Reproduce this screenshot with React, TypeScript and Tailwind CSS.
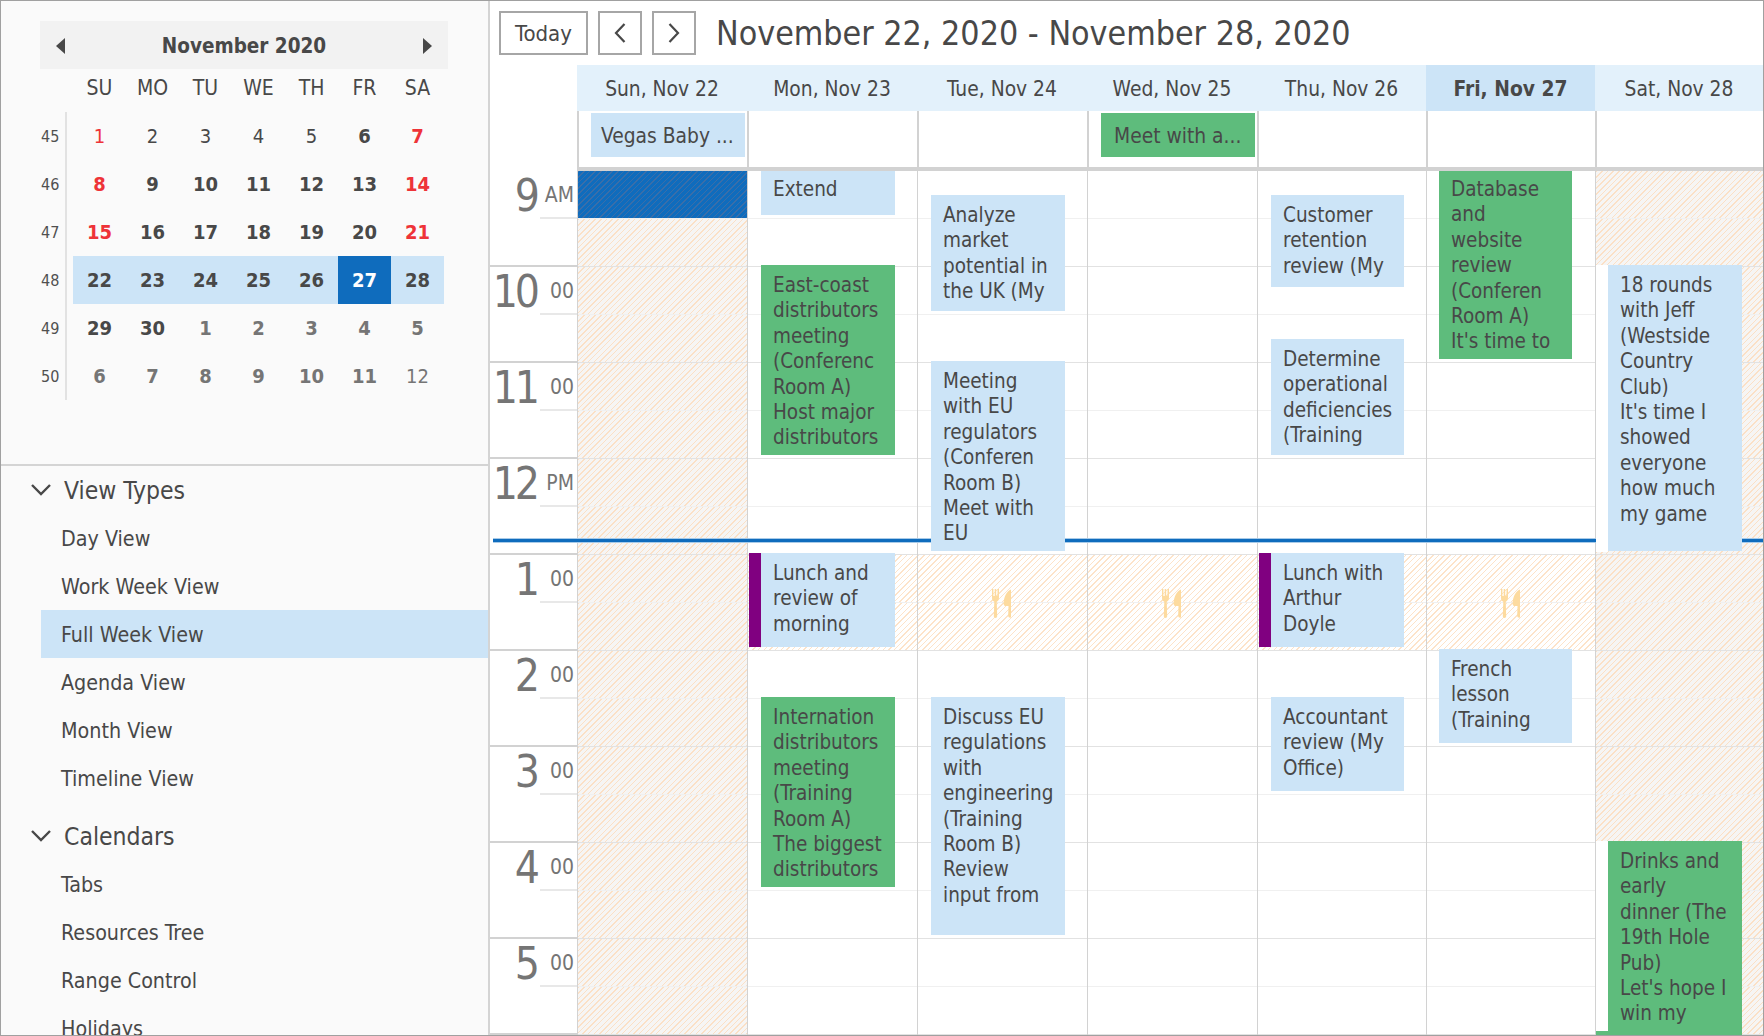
const font = "font-['DejaVu_Sans_Condensed','DejaVu_Sans',sans-serif]";

const hatchGray =
  'bg-[repeating-linear-gradient(135deg,#fbe0c6_0px,#fbe0c6_1px,#f6f5f4_1px,#f6f5f4_4px)]';
const hatchLight =
  'bg-[repeating-linear-gradient(135deg,#fde3c9_0px,#fde3c9_1px,#ffffff_1px,#ffffff_4px)]';
const hatchBlue =
  'bg-[repeating-linear-gradient(135deg,#3b6ea8_0px,#3b6ea8_1px,#0f6cbd_1px,#0f6cbd_4px)]';

type Day = { n: number; bold?: boolean; color?: string };

const red = 'text-[#ee3338]';
const gray = 'text-[#757575]';

const weeks: { week: number; days: Day[] }[] = [
  {
    week: 45,
    days: [
      { n: 1, color: red },
      { n: 2 },
      { n: 3 },
      { n: 4 },
      { n: 5 },
      { n: 6, bold: true },
      { n: 7, bold: true, color: red },
    ],
  },
  {
    week: 46,
    days: [
      { n: 8, bold: true, color: red },
      { n: 9, bold: true },
      { n: 10, bold: true },
      { n: 11, bold: true },
      { n: 12, bold: true },
      { n: 13, bold: true },
      { n: 14, bold: true, color: red },
    ],
  },
  {
    week: 47,
    days: [
      { n: 15, bold: true, color: red },
      { n: 16, bold: true },
      { n: 17, bold: true },
      { n: 18, bold: true },
      { n: 19, bold: true },
      { n: 20, bold: true },
      { n: 21, bold: true, color: red },
    ],
  },
  {
    week: 48,
    days: [22, 23, 24, 25, 26, 27, 28].map((n) => ({ n, bold: true })),
  },
  {
    week: 49,
    days: [
      { n: 29, bold: true },
      { n: 30, bold: true },
      { n: 1, bold: true, color: gray },
      { n: 2, bold: true, color: gray },
      { n: 3, bold: true, color: gray },
      { n: 4, bold: true, color: gray },
      { n: 5, bold: true, color: gray },
    ],
  },
  {
    week: 50,
    days: [
      { n: 6, bold: true, color: gray },
      { n: 7, bold: true, color: gray },
      { n: 8, bold: true, color: gray },
      { n: 9, bold: true, color: gray },
      { n: 10, bold: true, color: gray },
      { n: 11, bold: true, color: gray },
      { n: 12, color: gray },
    ],
  },
];

const viewTypes = ['Day View', 'Work Week View', 'Full Week View', 'Agenda View', 'Month View', 'Timeline View'];
const calendarItems = ['Tabs', 'Resources Tree', 'Range Control', 'Holidays'];

const Chevron = () => (
  <svg width="20" height="12" viewBox="0 0 20 12" className="ml-[30px] mr-[13px]">
    <polyline points="1,1 10,10 19,1" fill="none" stroke="#484848" strokeWidth="2.4" />
  </svg>
);

const MiniCalendar = () => (
  <div className="h-[465px] pt-[20px] pl-[39px] border-b-2 border-[#d4d4d4]">
    <div className="w-[408px] h-[48px] bg-[#f2f2f2] flex items-center justify-between px-[16px] pt-[2px]">
      <svg width="9" height="16" viewBox="0 0 9 16">
        <polygon points="9,0 9,16 0,8" fill="#484848" />
      </svg>
      <span className="text-[20.5px] font-bold text-[#484848]">November 2020</span>
      <svg width="9" height="16" viewBox="0 0 9 16">
        <polygon points="0,0 0,16 9,8" fill="#484848" />
      </svg>
    </div>
    <div className="grid grid-cols-[repeat(7,53px)] ml-[33px] h-[34px] pt-[4px] items-center text-center text-[21px] text-[#484848]">
      {['SU', 'MO', 'TU', 'WE', 'TH', 'FR', 'SA'].map((d) => (
        <div key={d}>{d}</div>
      ))}
    </div>
    <div className="flex mt-[9px]">
      <div className="w-[27px] border-r-2 border-[#e2e2e2] shrink-0">
        {weeks.map((w) => (
          <div key={w.week} className="h-[48px] flex items-center text-[16px] text-[#505050] pl-[1px] pt-[2px]">
            {w.week}
          </div>
        ))}
      </div>
      <div className="ml-[6px]">
        {weeks.map((w) => (
          <div
            key={w.week}
            className={`grid grid-cols-[repeat(7,53px)] h-[48px] text-[20px] ${w.week === 48 ? 'bg-[#cce4f7]' : ''}`}
          >
            {w.days.map((d, i) => {
              const today = w.week === 48 && d.n === 27;
              return (
                <div
                  key={i}
                  className={`flex items-center justify-center ${d.bold ? 'font-bold' : ''} ${
                    today ? 'bg-[#0f6cbd] text-white' : d.color ?? 'text-[#484848]'
                  }`}
                >
                  {d.n}
                </div>
              );
            })}
          </div>
        ))}
      </div>
    </div>
  </div>
);

const NavGroup = ({ title, items, active }: { title: string; items: string[]; active?: string }) => (
  <div>
    <div className="h-[48px] flex items-center text-[24.5px] text-[#484848]">
      <Chevron />
      <span className="pt-[2px]">{title}</span>
    </div>
    {items.map((item) => (
      <div
        key={item}
        className={`h-[48px] ml-[40px] pl-[20px] pt-[2px] flex items-center text-[21.3px] text-[#484848] ${
          item === active ? 'bg-[#cce4f7]' : ''
        }`}
      >
        {item}
      </div>
    ))}
  </div>
);

const Sidebar = () => (
  <aside className="w-[489px] shrink-0 h-full overflow-hidden bg-[#fafafa] border-r-2 border-[#d4d4d4]">
    <MiniCalendar />
    <NavGroup title="View Types" items={viewTypes} active="Full Week View" />
    <div className="h-[10px]" />
    <NavGroup title="Calendars" items={calendarItems} />
  </aside>
);

const colClass = 'grid grid-cols-[170px_170px_170px_170px_169px_169px_1fr]';

const dayHeaders = [
  'Sun, Nov 22',
  'Mon, Nov 23',
  'Tue, Nov 24',
  'Wed, Nov 25',
  'Thu, Nov 26',
  'Fri, Nov 27',
  'Sat, Nov 28',
];

const hours = [
  { h: '9', sub: 'AM' },
  { h: '10', sub: '00' },
  { h: '11', sub: '00' },
  { h: '12', sub: 'PM' },
  { h: '1', sub: '00' },
  { h: '2', sub: '00' },
  { h: '3', sub: '00' },
  { h: '4', sub: '00' },
  { h: '5', sub: '00' },
];

type Ev = { top: number; bottom: number; left: number; width: number; lines: string[]; green?: boolean; stripe?: boolean };

// tops and bottoms are page y values, minus the grid origin below
const gridTop = 171;

const columns: Ev[][] = [
  [],
  [
    { top: 171, bottom: 215, left: 14, width: 134, lines: ['Extend'] },
    {
      top: 265,
      bottom: 455,
      left: 14,
      width: 134,
      green: true,
      lines: ['East-coast', 'distributors', 'meeting', '(Conferenc', 'Room A)', 'Host major', 'distributors'],
    },
    { top: 553, bottom: 647, left: 14, width: 134, stripe: true, lines: ['Lunch and', 'review of', 'morning'] },
    {
      top: 697,
      bottom: 887,
      left: 14,
      width: 134,
      green: true,
      lines: ['Internation', 'distributors', 'meeting', '(Training', 'Room A)', 'The biggest', 'distributors'],
    },
  ],
  [
    { top: 195, bottom: 311, left: 14, width: 134, lines: ['Analyze', 'market', 'potential in', 'the UK (My'] },
    {
      top: 361,
      bottom: 551,
      left: 14,
      width: 134,
      lines: ['Meeting', 'with EU', 'regulators', '(Conferen', 'Room B)', 'Meet with', 'EU'],
    },
    {
      top: 697,
      bottom: 935,
      left: 14,
      width: 134,
      lines: ['Discuss EU', 'regulations', 'with', 'engineering', '(Training', 'Room B)', 'Review', 'input from'],
    },
  ],
  [],
  [
    { top: 195, bottom: 287, left: 14, width: 133, lines: ['Customer', 'retention', 'review (My'] },
    { top: 339, bottom: 455, left: 14, width: 133, lines: ['Determine', 'operational', 'deficiencies', '(Training'] },
    { top: 553, bottom: 647, left: 14, width: 133, stripe: true, lines: ['Lunch with', 'Arthur', 'Doyle'] },
    { top: 697, bottom: 791, left: 14, width: 133, lines: ['Accountant', 'review (My', 'Office)'] },
  ],
  [
    {
      top: 171,
      bottom: 359,
      left: 13,
      width: 133,
      green: true,
      lines: ['Database', 'and', 'website', 'review', '(Conferen', 'Room A)', "It's time to"],
    },
    { top: 649, bottom: 743, left: 13, width: 133, lines: ['French', 'lesson', '(Training'] },
  ],
  [
    {
      top: 265,
      bottom: 551,
      left: 13,
      width: 134,
      lines: ['18 rounds', 'with Jeff', '(Westside', 'Country', 'Club)', "It's time I", 'showed', 'everyone', 'how much', 'my game'],
    },
    {
      top: 841,
      bottom: 1035,
      left: 13,
      width: 134,
      green: true,
      lines: ['Drinks and', 'early', 'dinner (The', '19th Hole', 'Pub)', "Let's hope I", 'win my'],
    },
  ],
];

const ForkKnife = () => (
  <svg width="21" height="29" viewBox="0 0 21 29" className="absolute z-[1] left-[73px] top-[34px]">
    <path
      d="M1 0h1.4v7h1.3V0h1.5v7h1.3V0H8v9c0 2-1.2 3.2-2.3 3.7l.5 14.3c0 1.3-.8 2-1.7 2s-1.700-.7-1.700-2l.5-14.300C2.200 12.200 1 11 1 9z"
      fill="#fddb9f"
    />
    <path d="M20 .5v28c-1.3.5-2.8-.2-2.8-1.8l.3-9.700h-3.800l-1.200-2C12.800 8 15.500 2 20 .5z" fill="#fddb9f" />
  </svg>
);

// which half hour cells are hatched in each column
const cellClass = (col: number, row: number) => {
  if (col === 0) return row === 0 ? hatchBlue : hatchGray;
  if (col === 6) return hatchGray;
  if (col < 6 && (row === 8 || row === 9)) return hatchLight;
  return '';
};

const lunchIcon = [2, 3, 5];

const DayColumn = ({ index }: { index: number }) => (
  <div className="relative border-l border-[#d2d2d2]">
    {Array.from({ length: 18 }).map((_, r) => (
      <div
        key={r}
        className={`relative h-[48px] border-b ${r % 2 === 1 ? 'border-[#e2e2e2]' : 'border-[#f0f0f0]'} ${cellClass(index, r)}`}
      >
        {r === 8 && lunchIcon.includes(index) && <ForkKnife />}
      </div>
    ))}
    {index === 6 && (
      <>
        <div className="absolute z-10 left-0 w-[12px] bg-white top-[94px] h-[287px]" />
        <div className="absolute z-10 left-0 w-[12px] bg-white top-[670px] h-[190px]" />
        <div className="absolute z-10 left-0 w-[12px] bg-[#5ebc7c] top-[860px] h-[4px]" />
      </>
    )}
    {columns[index].map((ev, i) => (
      <div
        key={i}
        style={{ top: ev.top - gridTop, height: ev.bottom - ev.top, left: ev.left - 1, width: ev.width }}
        className={`absolute z-10 pl-[12px] overflow-hidden text-[20.5px] leading-[25.4px] text-[#484848] whitespace-nowrap ${
          ev.top === gridTop ? 'pt-[6px]' : 'pt-[8px]'
        } ${ev.green ? 'bg-[#5ebc7c]' : 'bg-[#cce4f7]'}`}
      >
        {ev.lines.map((l, j) => (
          <div key={j}>{l}</div>
        ))}
      </div>
    ))}
    {columns[index]
      .filter((ev) => ev.stripe)
      .map((ev, i) => (
        <div
          key={i}
          style={{ top: ev.top - gridTop, height: ev.bottom - ev.top }}
          className="absolute z-10 left-[1px] w-[12px] bg-[#800080]"
        />
      ))}
  </div>
);

const TimeColumn = () => (
  <div className="w-[87px] shrink-0">
    {hours.map((t) => (
      <div key={t.h} className="relative h-[96px] flex border-b-2 border-[#d2d2d2]">
        <div className="w-[47px] text-right text-[44px] leading-[50px] tracking-[-3px] text-[#757575] whitespace-nowrap">
          {t.h}
        </div>
        <div className="flex-1 text-right pr-[3px] pt-[11px] text-[21px] leading-[26px] text-[#757575]">{t.sub}</div>
        <div className="absolute left-[50px] right-0 top-[46px] h-[2px] bg-[#e8e8e8]" />
      </div>
    ))}
  </div>
);

const Scheduler = () => (
  <main className="flex-1 min-w-0 flex flex-col bg-white">
    <div className="h-[64px] shrink-0 flex items-center pl-[9px]">
      <button className="w-[89px] h-[44px] border-2 border-[#a6a6a6] text-[22px] text-[#484848]">Today</button>
      <button className="w-[44px] h-[44px] ml-[10px] border-2 border-[#a6a6a6] flex items-center justify-center">
        <svg width="12" height="20" viewBox="0 0 12 20">
          <polyline points="10.5,1 2,10 10.5,19" fill="none" stroke="#484848" strokeWidth="2.2" />
        </svg>
      </button>
      <button className="w-[44px] h-[44px] ml-[10px] border-2 border-[#a6a6a6] flex items-center justify-center">
        <svg width="12" height="20" viewBox="0 0 12 20">
          <polyline points="1.5,1 10,10 1.5,19" fill="none" stroke="#484848" strokeWidth="2.2" />
        </svg>
      </button>
      <h1 className="ml-[20px] pt-[2px] text-[33.7px] leading-[40px] text-[#484848] whitespace-nowrap">
        November 22, 2020 - November 28, 2020
      </h1>
    </div>

    <div className={`${colClass} ml-[87px] h-[46px] shrink-0 pt-[3px] bg-[#e3f1fb] text-[20.8px] text-[#484848]`}>
      {dayHeaders.map((d, i) => (
        <div
          key={d}
          className={`flex items-center justify-center -mt-[3px] pt-[3px] ${i === 5 ? 'bg-[#cce4f7] font-bold' : ''}`}
        >
          {d}
        </div>
      ))}
    </div>

    <div className={`${colClass} ml-[87px] h-[60px] shrink-0 border-b-4 border-[#d2d2d2] relative`}>
      {dayHeaders.map((d, i) => (
        <div key={d} className="relative border-l-2 border-[#d2d2d2]">
          {i === 0 && (
            <div className="absolute left-[12px] top-[2px] w-[154px] h-[44px] pl-[10px] pt-[3px] flex items-center bg-[#cce4f7] text-[20.8px] text-[#484848] whitespace-nowrap">
              Vegas Baby ...
            </div>
          )}
          {i === 3 && (
            <div className="absolute left-[12px] top-[2px] w-[154px] h-[44px] pl-[13px] pt-[3px] flex items-center bg-[#5ebc7c] text-[20.8px] text-[#484848] whitespace-nowrap">
              Meet with a...
            </div>
          )}
        </div>
      ))}
    </div>

    <div className="flex-1 min-h-0 overflow-hidden flex relative">
      <TimeColumn />
      <div className={`${colClass} flex-1 min-w-0`}>
        {columns.map((_, i) => (
          <DayColumn key={i} index={i} />
        ))}
      </div>
      <div className="absolute z-[5] left-[3px] right-0 top-[367px] h-[5px] border-y-[1.5px] border-[#a9cbe8] bg-[#0f6cbd]" />
    </div>
  </main>
);

export default function App() {
  return (
    <div className={`${font} w-[1764px] h-[1036px] flex overflow-hidden border border-[#a0a0a0] bg-white`}>
      <Sidebar />
      <Scheduler />
    </div>
  );
}
